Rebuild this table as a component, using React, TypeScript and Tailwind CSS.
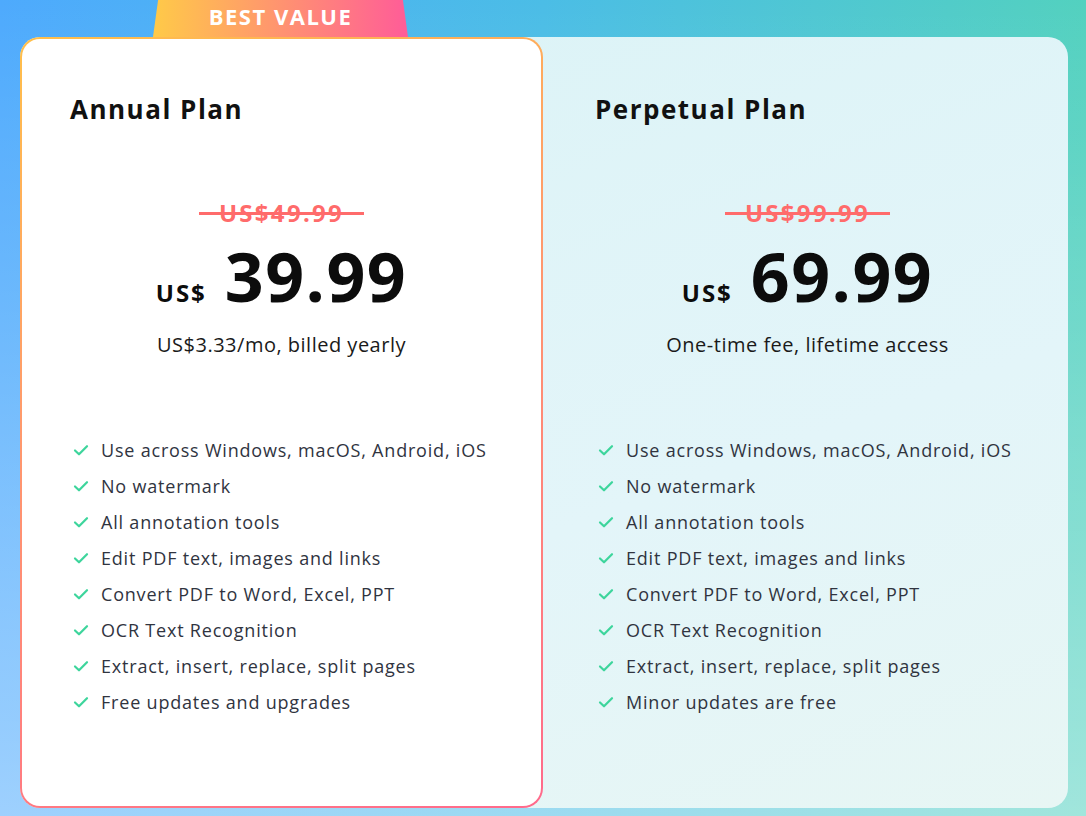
import React from 'react';

interface Plan {
  name: string;
  oldPrice: string;
  price: string;
  note: string;
  features: string[];
}

const plans: Plan[] = [
  {
    name: 'Annual Plan',
    oldPrice: 'US$49.99',
    price: '39.99',
    note: 'US$3.33/mo, billed yearly',
    features: [
      'Use across Windows, macOS, Android, iOS',
      'No watermark',
      'All annotation tools',
      'Edit PDF text, images and links',
      'Convert PDF to Word, Excel, PPT',
      'OCR Text Recognition',
      'Extract, insert, replace, split pages',
      'Free updates and upgrades',
    ],
  },
  {
    name: 'Perpetual Plan',
    oldPrice: 'US$99.99',
    price: '69.99',
    note: 'One-time fee, lifetime access',
    features: [
      'Use across Windows, macOS, Android, iOS',
      'No watermark',
      'All annotation tools',
      'Edit PDF text, images and links',
      'Convert PDF to Word, Excel, PPT',
      'OCR Text Recognition',
      'Extract, insert, replace, split pages',
      'Minor updates are free',
    ],
  },
];

const CheckIcon = () => (
  <svg width="16" height="16" viewBox="0 0 16 16" fill="none" className="shrink-0">
    <polyline points="2,8.5 6,12.3 14,4.2" stroke="#3dd59c" strokeWidth="2.2" strokeLinecap="round" strokeLinejoin="round" />
  </svg>
);

const PlanBody: React.FC<{ plan: Plan }> = ({ plan }) => (
  <div className="flex flex-col h-full pt-[52px] px-[48px]">
    <h2 className="text-[26px] leading-[36px] font-bold text-[#111] tracking-[1.5px]">{plan.name}</h2>
    {/* prices */}
    <div className="flex flex-col items-center mt-[70px]">
      <span className="px-5 text-[24px] leading-[32px] font-bold text-[#ff6b6b] tracking-[2.3px] bg-[linear-gradient(#ff6b6b,#ff6b6b)] bg-no-repeat bg-center bg-[length:100%_3px]">
        {plan.oldPrice}
      </span>
      <div className="flex items-baseline mt-[7px] leading-[80px] text-[#0c0c0c] font-bold">
        <span className="text-[24px] tracking-[2px] mr-[18px]">US$</span>
        <span className="text-[68px] tracking-[1.5px]">{plan.price}</span>
      </div>
      <div className="-mt-[2px] text-[20px] leading-[28px] text-[#1a1a1a] tracking-[0.5px]">{plan.note}</div>
    </div>
    {/* features */}
    <ul className="mt-[73px] ml-[3px] flex flex-col">
      {plan.features.map(f => (
        <li key={f} className="flex items-center gap-[12px] h-[36px] text-[18px] text-[#30343f] tracking-[0.8px]">
          <CheckIcon />
          <span>{f}</span>
        </li>
      ))}
    </ul>
  </div>
);

export default function App() {
  return (
    <div
      className="w-[1086px] h-[816px] overflow-hidden flex flex-col pl-[20px] pr-[18px] pb-[8px] bg-[linear-gradient(180deg,rgba(255,255,255,0)_0%,rgba(255,255,255,0.45)_100%),linear-gradient(90deg,#4eaafd_0%,#4bbde6_50%,#53d1bf_100%)]"
      style={{ fontFamily: '"Open Sans", "Noto Sans", sans-serif' }}
    >
      {/* badge row */}
      <div className="h-[37px] shrink-0 flex">
        <div className="ml-[133px] w-[255px] h-full pb-[6px] flex items-center justify-center bg-[linear-gradient(90deg,#ffca48,#ff5c98)] [clip-path:polygon(2%_0,98%_0,100%_100%,0_100%)]">
          <span className="text-white font-bold text-[22px] tracking-[1.5px] leading-none">BEST VALUE</span>
        </div>
      </div>
      {/* plans */}
      <div className="flex-1 flex rounded-[20px] bg-[linear-gradient(160deg,#dbf3f6_0%,#e3f5f9_60%,#e7f6f4_100%)]">
        <div className="w-[523px] shrink-0 rounded-[20px] p-[2px] bg-[linear-gradient(160deg,#ffbf4a_0%,#ff9a6c_40%,#ff6a8c_100%)]">
          <div className="h-full rounded-[18px] bg-white">
            <PlanBody plan={plans[0]} />
          </div>
        </div>
        <div className="flex-1 pl-[4px] py-[2px]">
          <PlanBody plan={plans[1]} />
        </div>
      </div>
    </div>
  );
}
